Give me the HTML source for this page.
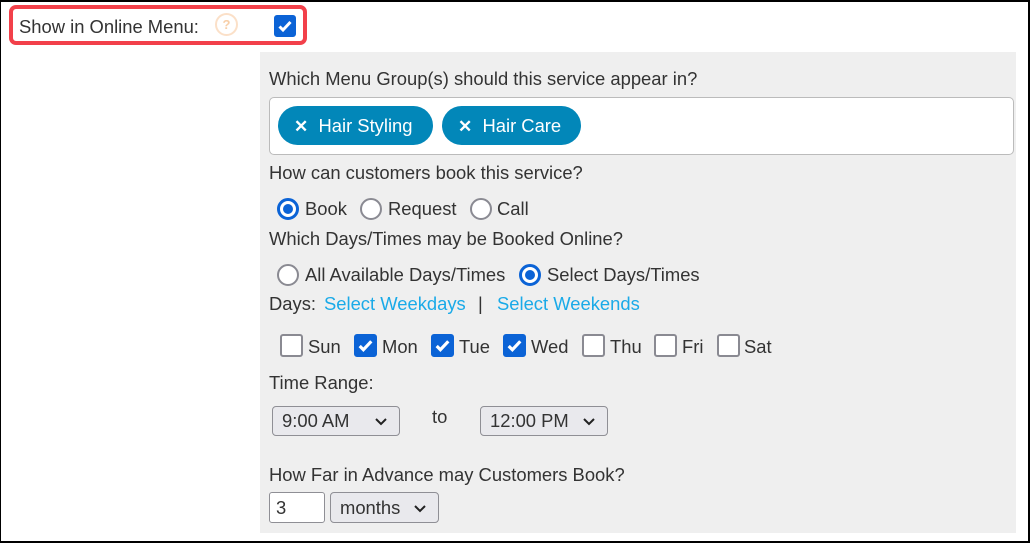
<!DOCTYPE html><html><head><style>
body{margin:0;width:1030px;height:542px;position:relative;overflow:hidden;background:#fff;font-family:"Liberation Sans",sans-serif;font-size:18.4px;color:#333}
.a{position:absolute;white-space:nowrap;line-height:20px}
.frame{position:absolute;left:0;top:0;width:1027px;height:539px;border:1px solid #000;border-width:2px 2px 2px 1px;box-sizing:content-box}
.cb{position:absolute;width:19px;height:19px;border:2px solid #8a8a92;border-radius:3px;background:#fff;box-sizing:content-box}
.cb.on{background:#0b63d6;border-color:#0b63d6}
.rd{position:absolute;width:18px;height:18px;border:2px solid #8a8a92;border-radius:50%;background:#fff}
.rd.on{border:3px solid #0b63d6;width:16px;height:16px}
.rd.on::after{content:"";position:absolute;left:3px;top:3px;width:10px;height:10px;border-radius:50%;background:#0b63d6}
.pill{position:absolute;top:106px;height:39px;background:#0287b9;border-radius:20px;color:#fff;line-height:39px;box-sizing:border-box;padding-left:16px}
.pill b{font-size:17px}
.sel{position:absolute;height:30px;border:1px solid #8f8f95;border-radius:4px;background:#e9e9ed;box-sizing:border-box;line-height:28px;padding-left:9px}
.lnk{color:#1aaae8}
</style></head><body>
<div class="frame"></div>
<div style="position:absolute;left:9px;top:5px;width:290px;height:32px;border:4px solid #f2404a;border-radius:7px"></div>
<div class="a" style="left:19px;top:17px">Show in Online Menu:</div>
<div style="position:absolute;left:215px;top:13px;width:19px;height:19px;border:2px solid #fbe0c8;border-radius:50%;color:#f8cfa8;font-size:13px;font-weight:bold;text-align:center;line-height:19px">?</div>
<div class="cb on" style="left:274px;top:15px;width:18px;height:18px"><svg width="18" height="18" viewBox="0 0 18 18"><path d="M3.5 9.5l3.5 3.5 7.5-8" stroke="#fff" stroke-width="3" fill="none"/></svg></div>
<div style="position:absolute;left:260px;top:52px;width:756px;height:481px;background:#efefef"></div>
<div class="a" style="left:269px;top:69px">Which Menu Group(s) should this service appear in?</div>
<div style="position:absolute;left:269px;top:97px;width:745px;height:58px;background:#fff;border:1px solid #bbb;border-radius:5px;box-sizing:border-box"></div>
<div class="pill" style="left:278px;width:155px"><b>✕</b>&nbsp;&nbsp;Hair Styling</div>
<div class="pill" style="left:442px;width:139px"><b>✕</b>&nbsp;&nbsp;Hair Care</div>
<div class="a" style="left:269px;top:163px">How can customers book this service?</div>
<div class="rd on" style="left:277px;top:198px"></div><div class="a" style="left:305px;top:199px">Book</div>
<div class="rd" style="left:360px;top:198px"></div><div class="a" style="left:388px;top:199px">Request</div>
<div class="rd" style="left:470px;top:198px"></div><div class="a" style="left:497px;top:199px">Call</div>
<div class="a" style="left:269px;top:229px">Which Days/Times may be Booked Online?</div>
<div class="rd" style="left:277px;top:264px"></div><div class="a" style="left:305px;top:265px">All Available Days/Times</div>
<div class="rd on" style="left:519px;top:264px"></div><div class="a" style="left:547px;top:265px">Select Days/Times</div>
<div class="a" style="left:269px;top:294px">Days:</div>
<div class="a lnk" style="left:324px;top:294px">Select Weekdays</div>
<div class="a" style="left:478px;top:294px">|</div>
<div class="a lnk" style="left:497px;top:294px">Select Weekends</div>
<div class="cb" style="left:280px;top:334px"></div><div class="a" style="left:308px;top:337px">Sun</div>
<div class="cb on" style="left:354px;top:334px"><svg width="19" height="19" viewBox="0 0 18 18"><path d="M3.5 9.5l3.5 3.5 7.5-8" stroke="#fff" stroke-width="3" fill="none"/></svg></div><div class="a" style="left:382px;top:337px">Mon</div>
<div class="cb on" style="left:431px;top:334px"><svg width="19" height="19" viewBox="0 0 18 18"><path d="M3.5 9.5l3.5 3.5 7.5-8" stroke="#fff" stroke-width="3" fill="none"/></svg></div><div class="a" style="left:459px;top:337px">Tue</div>
<div class="cb on" style="left:503px;top:334px"><svg width="19" height="19" viewBox="0 0 18 18"><path d="M3.5 9.5l3.5 3.5 7.5-8" stroke="#fff" stroke-width="3" fill="none"/></svg></div><div class="a" style="left:531px;top:337px">Wed</div>
<div class="cb" style="left:582px;top:334px"></div><div class="a" style="left:610px;top:337px">Thu</div>
<div class="cb" style="left:654px;top:334px"></div><div class="a" style="left:682px;top:337px">Fri</div>
<div class="cb" style="left:717px;top:334px"></div><div class="a" style="left:744px;top:337px">Sat</div>
<div class="a" style="left:269px;top:373px">Time Range:</div>
<div class="sel" style="left:272px;top:406px;width:128px">9:00 AM<svg style="position:absolute;right:12px;top:11px" width="12" height="8"><path d="M1 1l5 5 5-5" stroke="#222" stroke-width="2" fill="none"/></svg></div>
<div class="a" style="left:432px;top:407px">to</div>
<div class="sel" style="left:480px;top:406px;width:128px">12:00 PM<svg style="position:absolute;right:12px;top:11px" width="12" height="8"><path d="M1 1l5 5 5-5" stroke="#222" stroke-width="2" fill="none"/></svg></div>
<div class="a" style="left:269px;top:465px">How Far in Advance may Customers Book?</div>
<div style="position:absolute;left:269px;top:492px;width:56px;height:31px;background:#fff;border:1px solid #8f8f95;border-radius:3px;box-sizing:border-box;line-height:29px;padding-left:6px">3</div>
<div class="sel" style="left:330px;top:492px;width:109px;height:31px;line-height:29px">months<svg style="position:absolute;right:12px;top:12px" width="12" height="8"><path d="M1 1l5 5 5-5" stroke="#222" stroke-width="2" fill="none"/></svg></div>
</body></html>
